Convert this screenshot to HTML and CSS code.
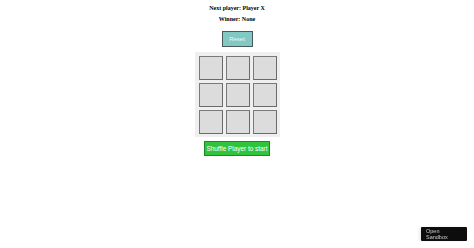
FILE: index.html
```html
<!DOCTYPE html>
<html>
<head>
<meta charset="utf-8">
<link rel="stylesheet" href="styles.css">
</head>
<body>
<div class="game">
  <div class="status">Next player: Player X</div>
  <div class="status">Winner: None</div>
  <button class="reset">Reset</button>
  <div class="board">
    <button class="cell"></button>
    <button class="cell"></button>
    <button class="cell"></button>
    <button class="cell"></button>
    <button class="cell"></button>
    <button class="cell"></button>
    <button class="cell"></button>
    <button class="cell"></button>
    <button class="cell"></button>
  </div>
  <button class="shuffle">Shuffle Player to start</button>
</div>
<button class="sandbox">Open<br>Sandbox</button>
</body>
</html>
```
FILE: styles.css
```css
html, body {
  margin: 0;
  padding: 0;
  background: #ffffff;
}
body {
  width: 474px;
  height: 248px;
  overflow: hidden;
}
.game {
  display: flex;
  flex-direction: column;
  align-items: center;
  padding-top: 3px;
}
.status {
  font-family: "Liberation Serif", "Times New Roman", serif;
  font-weight: bold;
  font-size: 6px;
  line-height: 11px;
  color: #000;
}
.reset {
  margin-top: 6px;
  width: 31px;
  height: 16px;
  padding: 0;
  background: #80c9c4;
  border: 1px solid #4a5a5a;
  color: #eef8f8;
  font-family: "Liberation Sans", Arial, sans-serif;
  font-size: 6px;
}
.board {
  margin-top: 5px;
  padding: 4px 3px 3px 4px;
  background: #efefef;
  display: grid;
  grid-template-columns: repeat(3, 24px);
  grid-auto-rows: 24px;
  gap: 3px;
}
.cell {
  margin: 0;
  padding: 0;
  background: #dcdcdc;
  border: 1px solid #6a6a6a;
  border-top-color: #7a7a7a;
  border-left-color: #7a7a7a;
}
.shuffle {
  margin-top: 4px;
  width: 66px;
  height: 15px;
  padding: 0;
  background: #2fc43a;
  border: 1px solid #1e8a26;
  color: #ffffff;
  font-family: "Liberation Sans", Arial, sans-serif;
  font-size: 6.4px;
  white-space: nowrap;
}
.sandbox {
  position: fixed;
  right: 7px;
  bottom: 7px;
  width: 46px;
  height: 14px;
  padding: 1px 5px;
  margin: 0;
  background: #0d0d0d;
  border: none;
  border-radius: 1px;
  color: #cfcfcf;
  font-family: "Liberation Sans", Arial, sans-serif;
  font-size: 5.5px;
  line-height: 6px;
  text-align: left;
  box-shadow: -2px 0 3px rgba(0,0,0,0.08);
}
```
